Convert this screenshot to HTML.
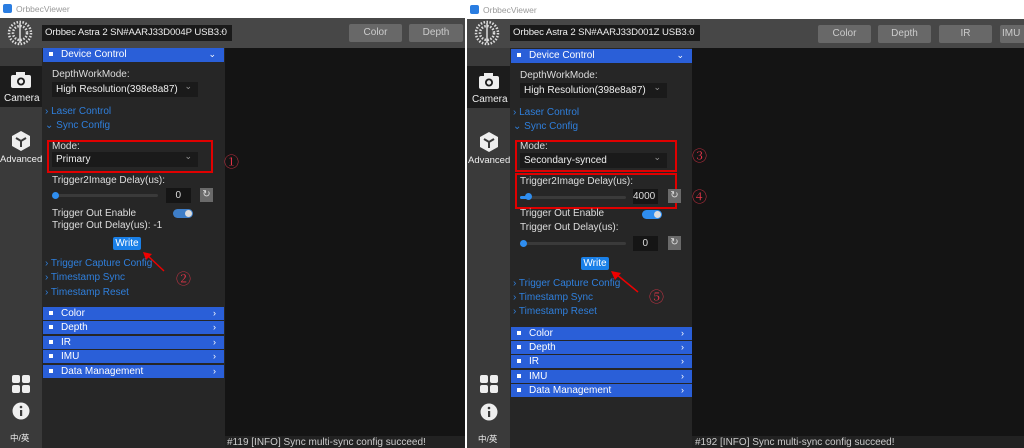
<!DOCTYPE html>
<html><head><meta charset="utf-8"><style>
*{margin:0;padding:0;box-sizing:border-box}
body{width:1024px;height:448px;overflow:hidden;background:#fff;font-family:"Liberation Sans","Noto Sans CJK SC",sans-serif;position:relative}
.a{position:absolute}
.t{position:absolute;font-size:10px;color:#ddd;white-space:nowrap;line-height:12px}
.lnk{color:#2f7fdc}
.bar{position:absolute;height:13px;background:#2a5fd8;color:#fff;font-size:10px;line-height:13px;padding-left:18px;white-space:nowrap}
.bar:before{content:"";position:absolute;left:6px;top:4px;width:4px;height:4px;background:#fff}
.bar .ch{position:absolute;right:8px;top:0;font-size:9px}
.dd{position:absolute;background:#1a1a1a;color:#eee;font-size:10px;line-height:15px;padding-left:4px;height:15px;white-space:nowrap;overflow:hidden}
.dd:after{content:"⌄";position:absolute;right:6px;top:-3px;color:#999;font-size:9px}
.dev{font-size:9.6px;letter-spacing:-0.1px;line-height:16px;padding-left:3px}
.btn{position:absolute;background:#686868;color:#ccc;font-size:10px;text-align:center;line-height:18px;height:18px;border-radius:2px;overflow:hidden;white-space:nowrap}
.red{position:absolute;border:2px solid #e00000}
.num{position:absolute;color:#e8364a;font-size:15px;font-family:"Liberation Serif","Noto Serif CJK SC",serif}
.track{position:absolute;height:3px;background:#3a3a3a;border-radius:2px}
.knob{position:absolute;width:7px;height:7px;border-radius:50%;background:#2f8ef0}
.nbox{position:absolute;background:#151515;color:#ddd;font-size:10px;text-align:right;padding-right:10px;line-height:15px;height:15px}
.rst{position:absolute;width:13px;height:14px;background:#6a6a6a;color:#ddd;font-size:10px;text-align:center;line-height:14px}
.tg{position:absolute;width:20px;height:9px;border-radius:5px;background:#2f8ef0}
.tg:after{content:"";position:absolute;right:1px;top:1px;width:7px;height:7px;border-radius:50%;background:#ddd}
.wr{position:absolute;background:#1a80e8;color:#fff;font-size:10px;text-align:center;line-height:13px;height:13px;border-radius:2px}
.st{position:absolute;font-size:10px;color:#ccc;white-space:nowrap}
</style></head><body>

<!-- LEFT WINDOW -->
<div class="a" style="left:0;top:0;width:466px;height:448px;overflow:hidden">
 <div class="a" style="left:0;top:0;width:466px;height:18px;background:#fff"></div>
 <div class="a" style="left:3px;top:4px;width:9px;height:9px;background:#2a7de1;border-radius:2px"></div>
 <div class="t" style="left:16px;top:3px;color:#999;font-size:8.5px">OrbbecViewer</div>
 <div class="a" style="left:0;top:18px;width:466px;height:30px;background:#474747"></div>
 <svg class="a" style="left:5px;top:20px" width="30" height="26"><g fill="none" stroke="#ddd" stroke-width="2.5" stroke-dasharray="1.5 1.5"><circle cx="15" cy="13" r="11"/><circle cx="15" cy="13" r="7"/></g><line x1="15" y1="3" x2="15" y2="23" stroke="#ddd" stroke-width="1.5"/></svg>
 <div class="dd dev" style="left:42px;top:25px;width:190px;height:16px">Orbbec Astra 2 SN#AARJ33D004P USB3.0</div>
 <div class="btn" style="left:349px;top:24px;width:53px">Color</div>
 <div class="btn" style="left:409px;top:24px;width:54px">Depth</div>
 <div class="a" style="left:0;top:48px;width:42px;height:400px;background:#3a3a3a"></div>
 <div class="a" style="left:0;top:66px;width:42px;height:41px;background:#1c1c1c"></div>
 <svg class="a" style="left:10px;top:71px" width="22" height="18"><rect x="1" y="4" width="20" height="13" rx="2" fill="#eee"/><rect x="6" y="1" width="9" height="4" fill="#eee"/><circle cx="11" cy="10.5" r="4" fill="#1c1c1c"/><circle cx="11" cy="10.5" r="2.2" fill="#eee"/></svg>
 <div class="t" style="left:4px;top:93px;color:#eee">Camera</div>
 <svg class="a" style="left:10px;top:130px" width="22" height="22"><path d="M11 1 L20 6 V16 L11 21 L2 16 V6 Z" fill="#eee"/><path d="M6 8 L11 11 L16 8 M11 11 V17" stroke="#3a3a3a" stroke-width="2" fill="none"/></svg>
 <div class="t" style="left:0;top:154px;color:#eee;font-size:9.5px">Advanced</div>
 <svg class="a" style="left:12px;top:375px" width="18" height="18"><rect x="0" y="0" width="8" height="8" rx="2" fill="#eee"/><rect x="10" y="0" width="8" height="8" rx="2" fill="#eee"/><rect x="0" y="10" width="8" height="8" rx="2" fill="#eee"/><rect x="10" y="10" width="8" height="8" rx="2" fill="#eee"/></svg>
 <svg class="a" style="left:12px;top:402px" width="18" height="18"><circle cx="9" cy="9" r="8.5" fill="#eee"/><rect x="8" y="8" width="2.2" height="6" fill="#3a3a3a"/><circle cx="9" cy="5" r="1.3" fill="#3a3a3a"/></svg>
 <div class="t" style="left:10px;top:432px;color:#eee;font-size:8.5px">中/英</div>
 <div class="a" style="left:42px;top:48px;width:183px;height:400px;background:#262626"></div>
 <div class="a" style="left:225px;top:48px;width:241px;height:388px;background:#141414"></div>
 <div class="a" style="left:225px;top:436px;width:241px;height:12px;background:#222"></div>
 <div class="bar" style="left:43px;top:48px;width:181px;height:14px">Device Control<span class="ch">⌄</span></div>
 <div class="t" style="left:52px;top:69px">DepthWorkMode:</div>
 <div class="dd" style="left:52px;top:82px;width:146px">High Resolution(398e8a87)</div>
 <div class="t lnk" style="left:45px;top:106px">› Laser Control</div>
 <div class="t lnk" style="left:45px;top:120px">⌄ Sync Config</div>
 <div class="red" style="left:47px;top:140px;width:166px;height:33px"></div>
 <div class="t" style="left:52px;top:141px">Mode:</div>
 <div class="dd" style="left:52px;top:152px;width:146px">Primary</div>
 <div class="num" style="left:224px;top:151px">①</div>
 <div class="t" style="left:52px;top:175px">Trigger2Image Delay(us):</div>
 <div class="track" style="left:52px;top:194px;width:106px"></div>
 <div class="knob" style="left:52px;top:192px"></div>
 <div class="nbox" style="left:166px;top:188px;width:25px">0</div>
 <div class="rst" style="left:200px;top:188px">↻</div>
 <div class="t" style="left:52px;top:208px">Trigger Out Enable</div>
 <div class="tg" style="left:173px;top:209px;background:#3e7ec8"></div>
 <div class="t" style="left:52px;top:220px">Trigger Out Delay(us): -1</div>
 <div class="wr" style="left:113px;top:237px;width:28px">Write</div>
 <svg class="a" style="left:140px;top:250px" width="30" height="25"><line x1="24" y1="21" x2="7" y2="5" stroke="#e00" stroke-width="1.5"/><path d="M3 2 L12 4 L6 10 Z" fill="#e00"/></svg>
 <div class="num" style="left:176px;top:268px">②</div>
 <div class="t lnk" style="left:45px;top:258px">› Trigger Capture Config</div>
 <div class="t lnk" style="left:45px;top:272px">› Timestamp Sync</div>
 <div class="t lnk" style="left:45px;top:287px">› Timestamp Reset</div>
 <div class="bar" style="left:43px;top:307px;width:181px">Color<span class="ch">›</span></div>
 <div class="bar" style="left:43px;top:321px;width:181px">Depth<span class="ch">›</span></div>
 <div class="bar" style="left:43px;top:336px;width:181px">IR<span class="ch">›</span></div>
 <div class="bar" style="left:43px;top:350px;width:181px">IMU<span class="ch">›</span></div>
 <div class="bar" style="left:43px;top:365px;width:181px">Data Management<span class="ch">›</span></div>
 <div class="st" style="left:227px;top:437px">#119 [INFO] Sync multi-sync config succeed!</div>
</div>

<!-- RIGHT WINDOW -->
<div class="a" style="left:467px;top:0;width:557px;height:448px;overflow:hidden">
 <div class="a" style="left:0;top:0;width:557px;height:19px;background:#fff"></div>
 <div class="a" style="left:3px;top:5px;width:9px;height:9px;background:#2a7de1;border-radius:2px"></div>
 <div class="t" style="left:16px;top:4px;color:#999;font-size:8.5px">OrbbecViewer</div>
 <div class="a" style="left:0;top:19px;width:557px;height:29px;background:#474747"></div>
 <svg class="a" style="left:5px;top:20px" width="30" height="26"><g fill="none" stroke="#ddd" stroke-width="2.5" stroke-dasharray="1.5 1.5"><circle cx="15" cy="13" r="11"/><circle cx="15" cy="13" r="7"/></g><line x1="15" y1="3" x2="15" y2="23" stroke="#ddd" stroke-width="1.5"/></svg>
 <div class="dd dev" style="left:43px;top:25px;width:190px;height:16px">Orbbec Astra 2 SN#AARJ33D001Z USB3.0</div>
 <div class="btn" style="left:351px;top:25px;width:53px">Color</div>
 <div class="btn" style="left:411px;top:25px;width:53px">Depth</div>
 <div class="btn" style="left:472px;top:25px;width:53px">IR</div>
 <div class="btn" style="left:533px;top:25px;width:53px;text-align:left;padding-left:2px">IMU</div>
 <div class="a" style="left:0;top:48px;width:43px;height:400px;background:#3a3a3a"></div>
 <div class="a" style="left:0;top:66px;width:43px;height:42px;background:#1c1c1c"></div>
 <svg class="a" style="left:11px;top:72px" width="22" height="18"><rect x="1" y="4" width="20" height="13" rx="2" fill="#eee"/><rect x="6" y="1" width="9" height="4" fill="#eee"/><circle cx="11" cy="10.5" r="4" fill="#1c1c1c"/><circle cx="11" cy="10.5" r="2.2" fill="#eee"/></svg>
 <div class="t" style="left:5px;top:94px;color:#eee">Camera</div>
 <svg class="a" style="left:11px;top:131px" width="22" height="22"><path d="M11 1 L20 6 V16 L11 21 L2 16 V6 Z" fill="#eee"/><path d="M6 8 L11 11 L16 8 M11 11 V17" stroke="#3a3a3a" stroke-width="2" fill="none"/></svg>
 <div class="t" style="left:1px;top:155px;color:#eee;font-size:9.5px">Advanced</div>
 <svg class="a" style="left:13px;top:375px" width="18" height="18"><rect x="0" y="0" width="8" height="8" rx="2" fill="#eee"/><rect x="10" y="0" width="8" height="8" rx="2" fill="#eee"/><rect x="0" y="10" width="8" height="8" rx="2" fill="#eee"/><rect x="10" y="10" width="8" height="8" rx="2" fill="#eee"/></svg>
 <svg class="a" style="left:13px;top:403px" width="18" height="18"><circle cx="9" cy="9" r="8.5" fill="#eee"/><rect x="8" y="8" width="2.2" height="6" fill="#3a3a3a"/><circle cx="9" cy="5" r="1.3" fill="#3a3a3a"/></svg>
 <div class="t" style="left:11px;top:433px;color:#eee;font-size:8.5px">中/英</div>
 <div class="a" style="left:43px;top:48px;width:182px;height:400px;background:#262626"></div>
 <div class="a" style="left:225px;top:48px;width:332px;height:388px;background:#141414"></div>
 <div class="a" style="left:225px;top:436px;width:332px;height:12px;background:#222"></div>
 <div class="bar" style="left:44px;top:49px;width:181px;height:14px">Device Control<span class="ch">⌄</span></div>
 <div class="t" style="left:53px;top:70px">DepthWorkMode:</div>
 <div class="dd" style="left:53px;top:83px;width:147px">High Resolution(398e8a87)</div>
 <div class="t lnk" style="left:46px;top:107px">› Laser Control</div>
 <div class="t lnk" style="left:46px;top:121px">⌄ Sync Config</div>
 <div class="red" style="left:48px;top:140px;width:162px;height:32px"></div>
 <div class="t" style="left:53px;top:141px">Mode:</div>
 <div class="dd" style="left:53px;top:153px;width:147px">Secondary-synced</div>
 <div class="num" style="left:225px;top:145px">③</div>
 <div class="red" style="left:48px;top:173px;width:162px;height:36px"></div>
 <div class="t" style="left:53px;top:176px">Trigger2Image Delay(us):</div>
 <div class="track" style="left:53px;top:196px;width:106px"></div>
 <div class="track" style="left:53px;top:196px;width:10px;background:#2f8ef0"></div>
 <div class="knob" style="left:58px;top:193px"></div>
 <div class="nbox" style="left:166px;top:189px;width:25px">4000</div>
 <div class="rst" style="left:201px;top:189px">↻</div>
 <div class="num" style="left:225px;top:186px">④</div>
 <div class="t" style="left:53px;top:208px">Trigger Out Enable</div>
 <div class="tg" style="left:175px;top:210px"></div>
 <div class="t" style="left:53px;top:222px">Trigger Out Delay(us):</div>
 <div class="track" style="left:53px;top:242px;width:106px"></div>
 <div class="knob" style="left:53px;top:240px"></div>
 <div class="nbox" style="left:166px;top:236px;width:25px">0</div>
 <div class="rst" style="left:201px;top:236px">↻</div>
 <div class="wr" style="left:114px;top:257px;width:28px">Write</div>
 <svg class="a" style="left:141px;top:270px" width="34" height="25"><line x1="30" y1="22" x2="8" y2="4" stroke="#e00" stroke-width="1.5"/><path d="M3 1 L13 3 L7 10 Z" fill="#e00"/></svg>
 <div class="num" style="left:182px;top:286px">⑤</div>
 <div class="t lnk" style="left:46px;top:278px">› Trigger Capture Config</div>
 <div class="t lnk" style="left:46px;top:292px">› Timestamp Sync</div>
 <div class="t lnk" style="left:46px;top:306px">› Timestamp Reset</div>
 <div class="bar" style="left:44px;top:327px;width:181px">Color<span class="ch">›</span></div>
 <div class="bar" style="left:44px;top:341px;width:181px">Depth<span class="ch">›</span></div>
 <div class="bar" style="left:44px;top:355px;width:181px">IR<span class="ch">›</span></div>
 <div class="bar" style="left:44px;top:370px;width:181px">IMU<span class="ch">›</span></div>
 <div class="bar" style="left:44px;top:384px;width:181px">Data Management<span class="ch">›</span></div>
 <div class="st" style="left:228px;top:437px">#192 [INFO] Sync multi-sync config succeed!</div>
</div>
<div class="a" style="left:465px;top:0;width:2px;height:448px;background:#fff"></div>
</body></html>
